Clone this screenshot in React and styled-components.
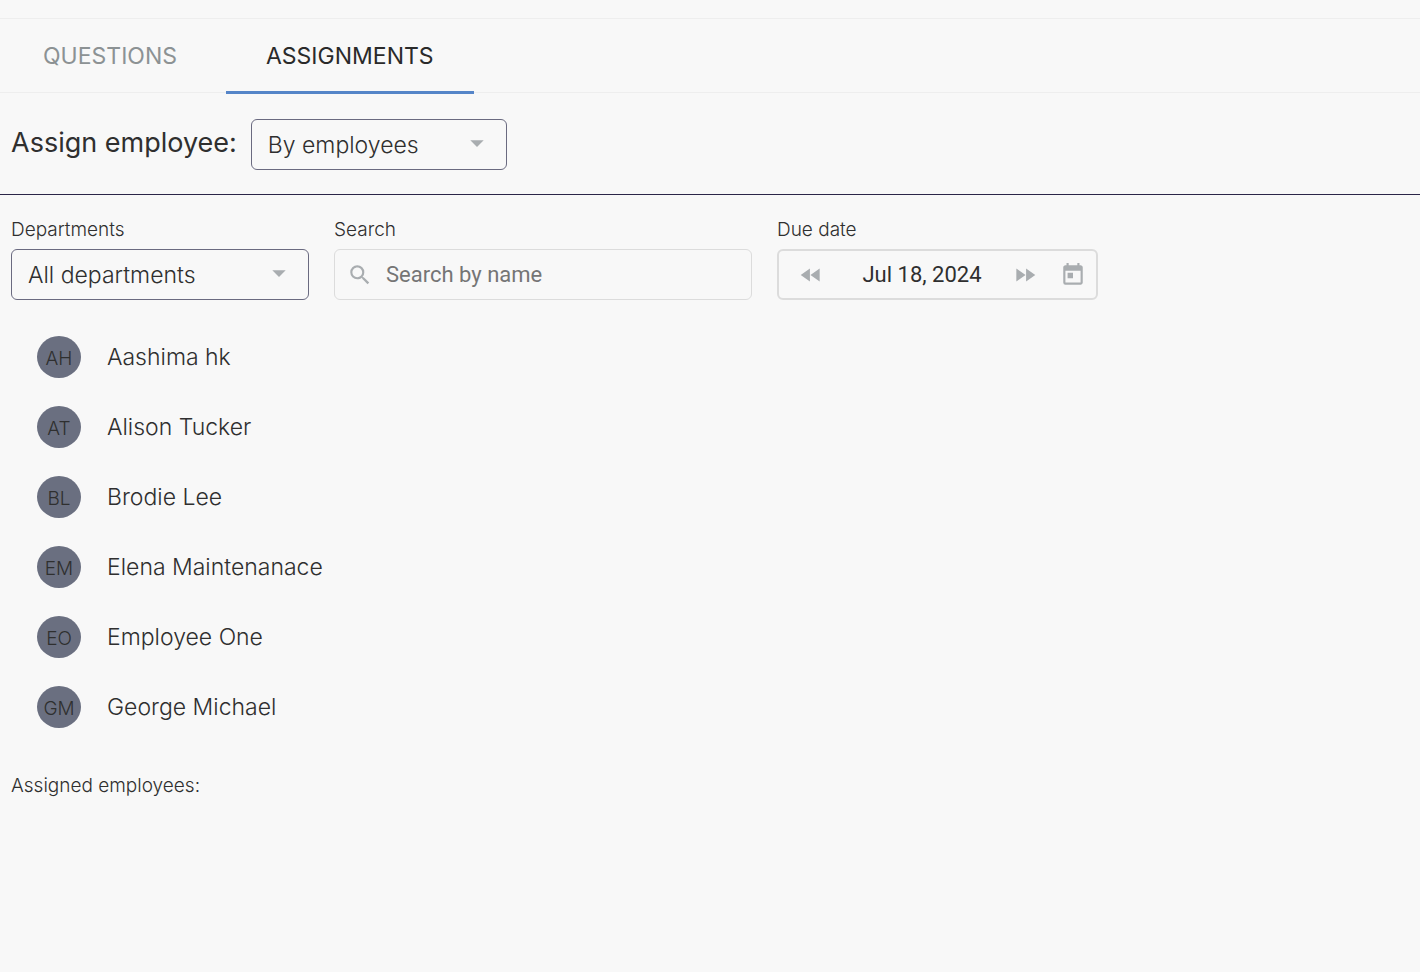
import React, { useState } from 'react'
import styled, { createGlobalStyle } from 'styled-components'
import { MdArrowDropDown, MdFastForward, MdFastRewind, MdSearch, MdToday } from 'react-icons/md'

const tabs = ['Questions', 'Assignments']

const employees = [
  { initials: 'AH', name: 'Aashima hk' },
  { initials: 'AT', name: 'Alison Tucker' },
  { initials: 'BL', name: 'Brodie Lee' },
  { initials: 'EM', name: 'Elena Maintenanace' },
  { initials: 'EO', name: 'Employee One' },
  { initials: 'GM', name: 'George Michael' },
]

function Dropdown({ id, options }) {
  return (
    <SelectBox>
      <select id={id}>
        {options.map((option) => <option key={option}>{option}</option>)}
      </select>
      <MdArrowDropDown />
    </SelectBox>
  )
}

function App() {
  const [active, setActive] = useState('Assignments')
  const [search, setSearch] = useState('')
  const [date, setDate] = useState(new Date(2024, 6, 18))

  const moveDate = (days) => {
    setDate(new Date(date.getFullYear(), date.getMonth(), date.getDate() + days))
  }
  const dateText = date.toLocaleDateString('en-US', { month: 'short', day: 'numeric', year: 'numeric' })
  const shown = employees.filter((item) => item.name.toLowerCase().includes(search.toLowerCase()))

  return (
    <Page>
      <GlobalStyle />
      <TabBar role='tablist'>
        {tabs.map((tab) => (
          <Tab key={tab} role='tab' aria-selected={active === tab} $active={active === tab} onClick={() => setActive(tab)}>
            {tab}
          </Tab>
        ))}
      </TabBar>
      <AssignBar>
        <AssignLabel htmlFor='assign'>Assign employee:</AssignLabel>
        <Dropdown id='assign' options={['By employees', 'By departments']} />
      </AssignBar>
      <Filters>
        <Field $width={298}>
          <FieldLabel htmlFor='departments'>Departments</FieldLabel>
          <Dropdown id='departments' options={['All departments']} />
        </Field>
        <Field $width={418}>
          <FieldLabel htmlFor='search'>Search</FieldLabel>
          <SearchBox>
            <MdSearch />
            <input id='search' placeholder='Search by name' value={search} onChange={(e) => setSearch(e.target.value)} />
          </SearchBox>
        </Field>
        <Field $width={321}>
          <FieldLabel as='span' id='due-date'>Due date</FieldLabel>
          <DateBox role='group' aria-labelledby='due-date'>
            <IconButton aria-label='Previous day' onClick={() => moveDate(-1)}><MdFastRewind /></IconButton>
            <DateText>{dateText}</DateText>
            <IconButton aria-label='Next day' onClick={() => moveDate(1)}><MdFastForward /></IconButton>
            <IconButton aria-label='Open calendar'><MdToday /></IconButton>
          </DateBox>
        </Field>
      </Filters>
      <EmployeeList>
        {shown.map((item) => (
          <Employee key={item.initials}>
            <Avatar>{item.initials}</Avatar>
            <span>{item.name}</span>
          </Employee>
        ))}
      </EmployeeList>
      <Assigned>Assigned employees:</Assigned>
    </Page>
  )
}

export default App

const GlobalStyle = createGlobalStyle`
  * {
    box-sizing: border-box;
  }
  body {
    margin: 0;
    background: #f8f8f8;
  }
  button, input, select {
    font: inherit;
    color: inherit;
  }
`
const Page = styled.main`
  padding-top: 18px;
  color: #2f2f2f;
  font-family: Inter, sans-serif;
  font-size: 23px;
  font-weight: 300;
`
const TabBar = styled.div`
  display: flex;
  gap: 9px;
  height: 75px;
  padding-left: 3px;
  border-top: 1px solid #eeeeee;
  border-bottom: 1px solid #eeeeee;
`
const Tab = styled.button`
  height: 75px;
  padding: 2px 40px 0;
  border: none;
  border-bottom: 3px solid ${({ $active }) => ($active ? '#5585c8' : 'transparent')};
  background: transparent;
  color: ${({ $active }) => ($active ? '#2a2a2a' : '#8c9294')};
  font-weight: 400;
  text-transform: uppercase;
  cursor: pointer;
`
const AssignBar = styled.div`
  display: flex;
  gap: 14px;
  padding: 26px 11px 24px;
  border-bottom: 1px solid #2b2648;
`
const AssignLabel = styled.label`
  font-size: 27px;
  line-height: 48px;
  font-weight: 400;
`
const SelectBox = styled.div`
  position: relative;
  min-width: 256px;
  select {
    width: 100%;
    height: 51px;
    padding: 0 56px 0 16px;
    border: 1px solid #6a6a80;
    border-radius: 6px;
    background: transparent;
    appearance: none;
  }
  svg {
    position: absolute;
    top: 8px;
    right: 14px;
    width: 32px;
    height: 32px;
    color: #a9adb0;
    pointer-events: none;
  }
`
const Filters = styled.div`
  display: flex;
  flex-wrap: wrap;
  gap: 25px;
  padding: 23px 11px 0;
`
const Field = styled.div`
  display: flex;
  flex-direction: column;
  gap: 7px;
  width: ${({ $width }) => $width}px;
`
const FieldLabel = styled.label`
  font-size: 19px;
  line-height: 24px;
`
const SearchBox = styled.div`
  display: flex;
  align-items: center;
  gap: 13px;
  height: 51px;
  padding: 0 12px;
  border: 1px solid #dcdcdc;
  border-radius: 6px;
  font-family: Roboto, sans-serif;
  font-size: 22px;
  font-weight: 400;
  svg {
    flex: none;
    width: 26px;
    height: 26px;
    color: #a9adb0;
  }
  input {
    flex: 1;
    min-width: 0;
    padding: 0;
    border: none;
    outline: none;
    background: transparent;
  }
  input::placeholder {
    color: #757575;
  }
`
const DateBox = styled.div`
  display: flex;
  align-items: center;
  height: 51px;
  padding: 0 10px 0 19px;
  border: 2px solid #dcdcdc;
  border-radius: 6px;
  font-family: Roboto, sans-serif;
  font-size: 22px;
  font-weight: 400;
`
const DateText = styled.span`
  flex: 1;
  padding-left: 8px;
  text-align: center;
`
const IconButton = styled.button`
  display: flex;
  padding: 0;
  border: none;
  background: transparent;
  color: #a9adb0;
  cursor: pointer;
  & + & {
    margin-left: 22px;
  }
  svg {
    width: 26px;
    height: 26px;
  }
`
const EmployeeList = styled.ul`
  display: flex;
  flex-direction: column;
  gap: 28px;
  margin: 0;
  padding: 36px 37px 0;
  list-style: none;
`
const Employee = styled.li`
  display: flex;
  align-items: center;
  gap: 26px;
  height: 42px;
`
const Avatar = styled.span`
  display: flex;
  justify-content: center;
  align-items: center;
  width: 44px;
  height: 42px;
  padding-top: 2px;
  border-radius: 50%;
  background: #6a6f80;
  font-size: 19px;
`
const Assigned = styled.p`
  margin: 0;
  padding: 46px 11px;
  font-size: 19px;
  line-height: 24px;
`
